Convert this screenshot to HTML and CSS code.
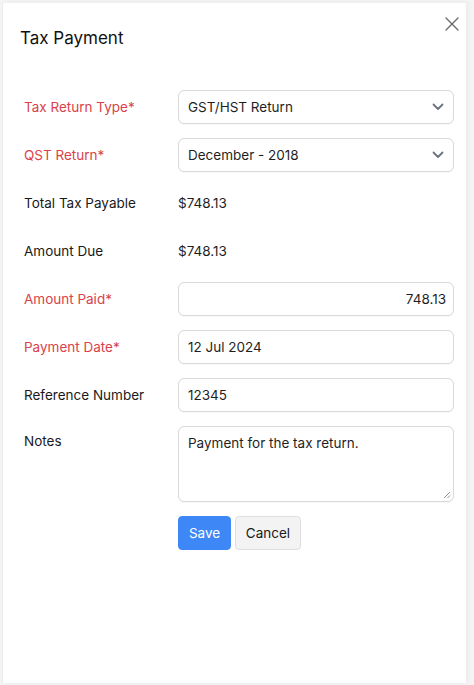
FILE: index.html
```html
<!DOCTYPE html>
<html lang="en">
<head>
<meta charset="utf-8">
<title>Tax Payment</title>
<link rel="stylesheet" href="styles.css">
</head>
<body>
<div class="panel">
  <div class="header">
    <h1 class="title">Tax Payment</h1>
    <button class="close" aria-label="Close">
      <svg width="14" height="14" viewBox="0 0 14 14"><path d="M1 1 L13 13 M13 1 L1 13" stroke="#6b6b6b" stroke-width="1.4" fill="none" stroke-linecap="round"/></svg>
    </button>
  </div>
  <form class="form">
    <div class="row">
      <label class="label req">Tax Return Type*</label>
      <div class="select"><span>GST/HST Return</span>
        <svg class="chev" width="12" height="8" viewBox="0 0 12 8"><path d="M1.5 1.5 L6 6 L10.5 1.5" stroke="#6b7280" stroke-width="1.8" fill="none" stroke-linecap="round" stroke-linejoin="round"/></svg>
      </div>
    </div>
    <div class="row">
      <label class="label req">QST Return*</label>
      <div class="select"><span>December - 2018</span>
        <svg class="chev" width="12" height="8" viewBox="0 0 12 8"><path d="M1.5 1.5 L6 6 L10.5 1.5" stroke="#6b7280" stroke-width="1.8" fill="none" stroke-linecap="round" stroke-linejoin="round"/></svg>
      </div>
    </div>
    <div class="row">
      <label class="label">Total Tax Payable</label>
      <div class="value">$748.13</div>
    </div>
    <div class="row">
      <label class="label">Amount Due</label>
      <div class="value">$748.13</div>
    </div>
    <div class="row">
      <label class="label req">Amount Paid*</label>
      <div class="input right">748.13</div>
    </div>
    <div class="row">
      <label class="label req">Payment Date*</label>
      <div class="input">12 Jul 2024</div>
    </div>
    <div class="row">
      <label class="label">Reference Number</label>
      <div class="input">12345</div>
    </div>
    <div class="row top">
      <label class="label notes-label">Notes</label>
      <div class="textarea">Payment for the tax return.
        <svg class="grip" width="9" height="9" viewBox="0 0 9 9"><path d="M8 2 L2 8 M8 5.5 L5.5 8" stroke="#8a8a8a" stroke-width="0.9" fill="none"/></svg>
      </div>
    </div>
    <div class="row actions-row">
      <span></span>
      <div class="actions">
        <button type="button" class="btn primary">Save</button>
        <button type="button" class="btn secondary">Cancel</button>
      </div>
    </div>
  </form>
</div>
</body>
</html>
```
FILE: styles.css
```css
* { box-sizing: border-box; }
html, body { margin: 0; padding: 0; }
body {
  background: #f4f4f4;
  font-family: Inter, "Liberation Sans", sans-serif;
  color: #1f1f1f;
  height: 685px;
  overflow: hidden;
}
.panel {
  margin: 2px 8px 0 2px;
  height: 681px;
  background: #fff;
  border-left: 1px solid #ececec;
  border-top: 1px solid #f0f0f0;
  box-shadow: 2px 0 5px rgba(0,0,0,0.04);
  display: flex;
  flex-direction: column;
}
.header {
  display: flex;
  justify-content: space-between;
  align-items: flex-start;
  padding: 13px 7px 0 17px;
  height: 87px;
}
.title {
  margin: 12px 0 0 0;
  font-size: 17px;
  font-weight: 400;
  color: #111;
  letter-spacing: 0;
}
.close {
  border: none;
  background: none;
  padding: 0;
  margin: 1px 0 0 0;
  width: 14px;
  height: 14px;
  display: flex;
}
.form {
  display: flex;
  flex-direction: column;
  gap: 14px;
  padding: 0 11px 0 21px;
}
.row {
  display: grid;
  grid-template-columns: 154px 276px;
  align-items: center;
  min-height: 34px;
}
.row.top { align-items: start; }
.label {
  font-size: 13.5px;
  color: #1a1a1a;
}
.label.req { color: #d9424a; }
.notes-label { padding-top: 7px; }
.value { font-size: 13.5px; color: #1f1f1f; }
.select, .input, .textarea {
  border: 1px solid #d9d9d9;
  border-radius: 6px;
  background: #fff;
  font-size: 13.5px;
  color: #1f1f1f;
  box-shadow: 0 1px 1px rgba(0,0,0,0.03);
}
.select {
  height: 34px;
  display: flex;
  align-items: center;
  justify-content: space-between;
  padding: 0 9px 0 9px;
}
.input {
  height: 34px;
  display: flex;
  align-items: center;
  padding: 0 9px;
}
.input.right { justify-content: flex-end; padding-right: 7px; }
.textarea {
  position: relative;
  height: 76px;
  padding: 7px 9px;
  line-height: 18px;
}
.grip { position: absolute; right: 2px; bottom: 2px; }
.actions-row { margin-top: 0; }
.actions { display: flex; gap: 4px; }
.btn {
  font-family: Inter, "Liberation Sans", sans-serif;
  font-size: 13.5px;
  height: 34px;
  border-radius: 4px;
  padding: 0;
}
.btn.primary {
  width: 53px;
  background: #3d88f6;
  color: #fff;
  border: 1px solid #3d88f6;
}
.btn.secondary {
  width: 66px;
  background: #f3f3f3;
  color: #1a1a1a;
  border: 1px solid #dedede;
}
```
